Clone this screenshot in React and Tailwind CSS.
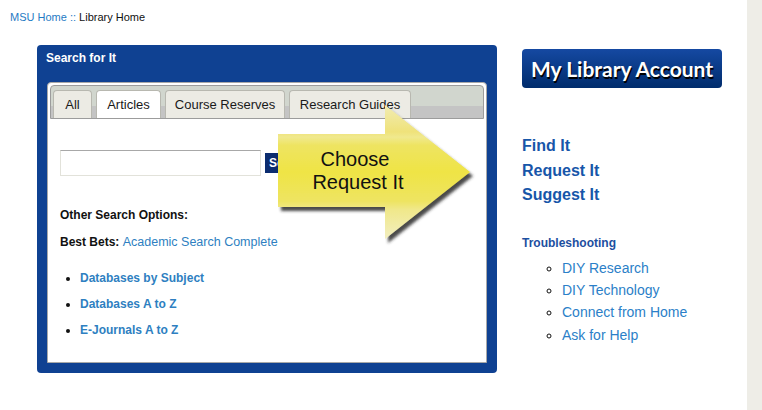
import React from "react";

function Arrow() {
  return (
    <div className="absolute left-[270px] top-[100px] w-[215px] h-[150px]">
      <svg width="215" height="150" viewBox="0 0 215 150" className="absolute left-0 top-0">
        <defs>
          <linearGradient id="ag" x1="0" y1="5" x2="0" y2="139" gradientUnits="userSpaceOnUse">
            <stop offset="0" stopColor="#f1ecb4" />
            <stop offset="0.2" stopColor="#efe27a" />
            <stop offset="0.24" stopColor="#f0e98e" />
            <stop offset="0.3" stopColor="#eee462" />
            <stop offset="0.5" stopColor="#efe445" />
            <stop offset="0.72" stopColor="#eee462" />
            <stop offset="0.78" stopColor="#f0e88a" />
            <stop offset="1" stopColor="#f2eec0" />
          </linearGradient>
          <filter id="sh" x="-10%" y="-10%" width="130%" height="130%">
            <feDropShadow dx="3" dy="4" stdDeviation="1.6" floodColor="#2a2a2a" floodOpacity="0.85" />
          </filter>
        </defs>
        <polygon
          points="8,34 115,34 115,5 200,72 115,139 115,107 8,107"
          fill="url(#ag)"
          filter="url(#sh)"
        />
      </svg>
      <div className="absolute left-[5px] top-[48px] w-[160px] text-center text-[20px] leading-[23px] text-[#111] font-['Liberation_Sans',Arial,sans-serif]">
        <div>Choose</div>
        <div className="pl-[6px]">Request It</div>
      </div>
    </div>
  );
}

export default function App() {
  const tabs = [
    { t: "All", w: "w-[39px]" },
    { t: "Articles", w: "w-[65px]", active: true },
    { t: "Course Reserves", w: "w-[120px]" },
    { t: "Research Guides", w: "w-[122px]" },
  ];
  return (
    <div className="w-[762px] h-[410px] flex bg-white font-['Liberation_Sans',Arial,sans-serif] overflow-hidden">
      <div className="flex-1 relative">
        <div className="pt-[11px] pl-[10px] text-[11px] leading-[13px]">
          <span className="text-[#1f7bc4]">MSU Home ::</span>{" "}
          <span className="text-[#111]">Library Home</span>
        </div>
        <div className="flex mt-[21px]">
          <div className="ml-[37px] w-[460px] h-[328px] bg-[#0f4192] rounded-[4px] px-[10px] pb-[10px] flex flex-col">
            <div className="h-[37px] pt-[6px] -ml-px text-[12px] leading-[14px] font-bold text-white">
              Search for It
            </div>
            <div className="flex-1 bg-white border border-[#a8a8a8] rounded-t-[4px] p-[2px]">
              <div className="h-[34px] border border-[#9c9c9c] rounded-t-[4px] bg-[linear-gradient(to_bottom,#d1d6ce_0px,#d1d6ce_20px,#c4c4c4_20px)] flex items-end pl-[2px] gap-[4px]">
                {tabs.map((tb) => (
                  <div
                    key={tb.t}
                    className={
                      "h-[28px] border border-b-0 border-[#b8b8b0] rounded-t-[4px] flex items-center justify-center text-[13px] text-[#1a1a1a] " +
                      tb.w +
                      (tb.active ? " bg-white" : " bg-[#ecebe4]")
                    }
                  >
                    {tb.t}
                  </div>
                ))}
              </div>
              <div className="pl-[10px]">
                <div className="flex items-center mt-[31px]">
                  <div className="w-[201px] h-[26px] border border-[#e2e2da] border-t-[#a8a8a8] bg-white" />
                  <div className="ml-[4px] h-[20px] px-[4px] bg-[#0b2c6f] text-white font-bold text-[12px] leading-[20px]">
                    Search
                  </div>
                </div>
                <div className="mt-[32px] text-[12px] leading-[14px] font-bold text-[#111]">
                  Other Search Options:
                </div>
                <div className="mt-[13px] text-[12px] leading-[14px] text-[#111]">
                  <span className="font-bold">Best Bets:</span>{" "}
                  <span className="text-[12.5px] text-[#2e7fc1]">Academic Search Complete</span>
                </div>
                <ul className="mt-[16px] list-disc pl-[20px] text-[12px] leading-[26px] font-bold text-[#2e7fc1] marker:text-[#111]">
                  <li>Databases by Subject</li>
                  <li>Databases A to Z</li>
                  <li>E-Journals A to Z</li>
                </ul>
              </div>
            </div>
          </div>
          <div className="ml-[25px] pt-[4px]">
            <div className="w-[200px] h-[39px] rounded-[4px] bg-[linear-gradient(to_bottom,#1549a2,#002c6c)] flex items-center justify-center">
              <span className="font-['Lato',sans-serif] font-bold text-[21px] text-white [text-shadow:1px_2px_0_#000]">
                My Library Account
              </span>
            </div>
            <div className="mt-[46px] text-[16px] leading-[24.5px] font-bold text-[#1756a9]">
              <div>Find It</div>
              <div>Request It</div>
              <div>Suggest It</div>
            </div>
            <div className="mt-[28px] text-[12px] leading-[14px] font-bold text-[#1d4fa0]">
              Troubleshooting
            </div>
            <ul className="mt-[7px] pl-[40px] list-[circle] text-[14px] leading-[22.4px] text-[#2b7fc8] marker:text-[#111]">
              <li>DIY Research</li>
              <li>DIY Technology</li>
              <li>Connect from Home</li>
              <li>Ask for Help</li>
            </ul>
          </div>
        </div>
        <Arrow />
      </div>
      <div className="w-[15px] h-[410px] bg-[#eeede7]" />
    </div>
  );
}
